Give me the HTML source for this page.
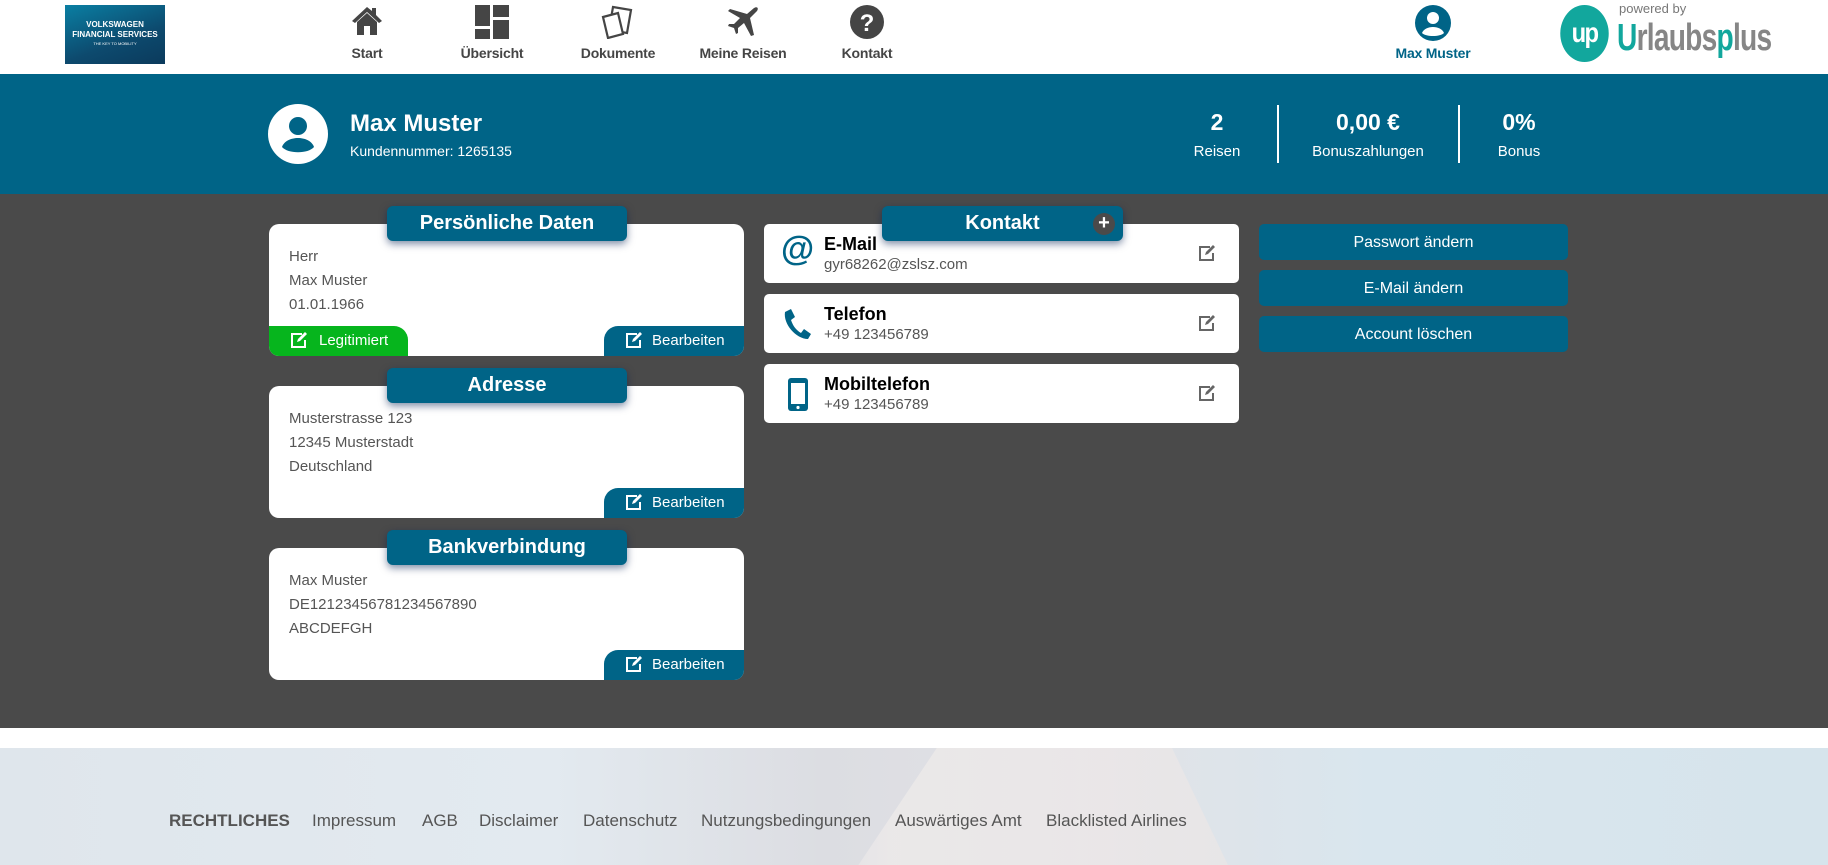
<!DOCTYPE html>
<html><head><meta charset="utf-8"><style>
*{margin:0;padding:0;box-sizing:border-box}
body{width:1828px;height:865px;overflow:hidden;font-family:"Liberation Sans",sans-serif;background:#fff;position:relative}
.a{position:absolute}
.blue{background:#006487}
.nav{position:absolute;top:0;width:130px;text-align:center}
.nav .ic{height:40px;padding-top:5px}
.nav svg{display:block;margin:0 auto}
.nav span{display:block;font-size:14px;font-weight:bold;color:#454545;margin-top:5px;letter-spacing:-0.2px}
.card{position:absolute;background:#fff;border-radius:10px;overflow:hidden}
.tab{position:absolute;background:#006487;color:#fff;font-weight:bold;font-size:20px;text-align:center;line-height:35px;border-radius:6px;box-shadow:0 3px 8px rgba(0,30,80,.5)}
.ln{position:absolute;left:20px;font-size:15px;color:#555}
.btn{position:absolute;bottom:0;height:30px;color:#fff;font-size:15px;line-height:30px}
.bb{right:0;width:140px;background:#006487;border-radius:14px 0 0 0;padding-left:48px}
.ct{position:absolute;left:60px;font-size:18px;font-weight:bold;color:#000}
.cs{position:absolute;left:60px;font-size:15px;color:#555}
.rb{position:absolute;left:1259px;width:309px;height:36px;background:#006487;border-radius:5px;color:#fff;font-size:16px;text-align:center;line-height:37px}
.edit{position:absolute;right:22px;top:20px}
.fl{position:absolute;top:811px;font-size:17px;color:#555}
</style></head><body>
<!-- header -->
<div class="a" style="left:65px;top:5px;width:100px;height:59px;background:linear-gradient(160deg,#0a7fa3,#0d4a6e 60%,#0b3a5c);color:#fff;text-align:center;font-size:8px;font-weight:bold;line-height:10px;padding-top:15px">VOLKSWAGEN<br>FINANCIAL SERVICES<div style="font-size:4px;font-weight:normal;line-height:8px">THE KEY TO MOBILITY</div></div>
<div class="nav" style="left:302px"><div class="ic"><svg width="34" height="32" viewBox="0 0 34 32"><path d="M17 2 L2 16 L5 18 L17 7 L29 18 L32 16 L26 10 L26 3 L22 3 L22 6 Z" fill="#454545"/><path d="M7 17 L17 8 L27 17 L27 30 L20 30 L20 21 L14 21 L14 30 L7 30 Z" fill="#454545"/></svg></div><span>Start</span></div>
<div class="nav" style="left:427px"><div class="ic"><svg width="34" height="34" viewBox="0 0 34 34"><rect x="0" y="0" width="15" height="21" fill="#454545"/><rect x="18" y="0" width="16" height="12" fill="#454545"/><rect x="18" y="15" width="16" height="19" fill="#454545"/><rect x="0" y="24" width="15" height="10" fill="#454545"/></svg></div><span>Übersicht</span></div>
<div class="nav" style="left:553px"><div class="ic"><svg width="34" height="34" viewBox="0 0 34 34"><path d="M12 2 L30 5 L26 28 L8 25 Z" fill="#fff" stroke="#454545" stroke-width="2.2"/><path d="M2 12 L17 8 L22 29 L7 33 Z" fill="#fff" stroke="#454545" stroke-width="2.2"/></svg></div><span>Dokumente</span></div>
<div class="nav" style="left:678px"><div class="ic"><svg width="34" height="32" viewBox="0 0 34 32"><path d="M28 3 C31 1 33 3 31 6 L24 13 L28 30 L25 31 L18 18 L12 23 L12 28 L10 29 L8 23 L2 21 L3 19 L8 19 L14 13 L2 6 L4 4 L21 9 Z" fill="#454545"/></svg></div><span>Meine Reisen</span></div>
<div class="nav" style="left:802px"><div class="ic"><svg width="34" height="34" viewBox="0 0 34 34"><circle cx="17" cy="17" r="17" fill="#454545"/><text x="17" y="26" font-family="Liberation Sans" font-weight="bold" font-size="24" fill="#fff" text-anchor="middle">?</text></svg></div><span>Kontakt</span></div>
<div class="nav" style="left:1368px"><div class="ic"><svg width="36" height="36" viewBox="0 0 36 36"><circle cx="18" cy="18" r="18" fill="#006487"/><circle cx="18" cy="13" r="6" fill="#fff"/><path d="M7 28 C10 20 26 20 29 28 C25 32 11 32 7 28Z" fill="#fff"/></svg></div><span style="color:#006487">Max Muster</span></div>
<div class="a" style="left:1556px;top:5px;width:57px;height:57px;border-radius:50%;background:#12a79d;color:#fff;font-weight:bold;font-size:28px;text-align:center;line-height:55px;letter-spacing:-2px;transform:scaleX(.85)">up</div>
<div class="a" style="left:1619px;top:1px;font-size:13px;color:#777">powered by</div>
<div class="a" style="left:1617px;top:17px;font-size:38px;font-weight:bold;letter-spacing:-1px;transform:scaleX(.74);transform-origin:left;color:#868686"><span style="color:#12a79d">U</span>rlaubs<span style="color:#12a79d">p</span>lus</div>
<!-- band -->
<div class="a blue" style="left:0;top:74px;width:1828px;height:120px"></div>
<svg class="a" style="left:268px;top:104px" width="60" height="60" viewBox="0 0 60 60"><circle cx="30" cy="30" r="30" fill="#fff"/><circle cx="30" cy="22" r="9" fill="#006487"/><path d="M14 43 C18 31 42 31 46 43 C40 50 20 50 14 43Z" fill="#006487"/></svg>
<div class="a" style="left:350px;top:110px;font-size:24px;font-weight:bold;color:#fff">Max Muster</div>
<div class="a" style="left:350px;top:143px;font-size:14px;color:#fff">Kundennummer: 1265135</div>
<div class="a" style="left:1157px;top:109px;width:120px;text-align:center;color:#fff"><div style="font-size:23px;font-weight:bold">2</div><div style="font-size:15px;margin-top:7px">Reisen</div></div>
<div class="a" style="left:1288px;top:109px;width:160px;text-align:center;color:#fff"><div style="font-size:23px;font-weight:bold">0,00 €</div><div style="font-size:15px;margin-top:7px">Bonuszahlungen</div></div>
<div class="a" style="left:1459px;top:109px;width:120px;text-align:center;color:#fff"><div style="font-size:23px;font-weight:bold">0%</div><div style="font-size:15px;margin-top:7px">Bonus</div></div>
<div class="a" style="left:1277px;top:105px;width:2px;height:58px;background:#fff"></div>
<div class="a" style="left:1458px;top:105px;width:2px;height:58px;background:#fff"></div>
<!-- gray -->
<div class="a" style="left:0;top:194px;width:1828px;height:534px;background:#4a4a4a"></div>

<svg width="0" height="0" style="position:absolute"><defs><g id="ed"><path d="M13 3 H3 V16 H16 V9" fill="none" stroke="currentColor" stroke-width="2"/><path d="M8 11 L9 8 L16 1 L18 3 L11 10 Z" fill="currentColor"/></g></defs></svg>

<div class="card" style="left:269px;top:224px;width:475px;height:132px">
<div class="ln" style="top:24px">Herr</div><div class="ln" style="top:48px">Max Muster</div><div class="ln" style="top:72px">01.01.1966</div>
<div class="btn" style="left:0;width:139px;background:#06b51d;border-radius:0 14px 0 0;padding-left:50px">Legitimiert</div>
<svg class="a" style="left:20px;top:107px;color:#fff" width="20" height="18"><use href="#ed"/></svg>
<div class="btn bb">Bearbeiten</div><svg class="a" style="left:355px;top:107px;color:#fff" width="20" height="18"><use href="#ed"/></svg>
</div>
<div class="tab" style="left:387px;top:206px;width:240px">Persönliche Daten</div>

<div class="card" style="left:269px;top:386px;width:475px;height:132px">
<div class="ln" style="top:24px">Musterstrasse 123</div><div class="ln" style="top:48px">12345 Musterstadt</div><div class="ln" style="top:72px">Deutschland</div>
<div class="btn bb">Bearbeiten</div><svg class="a" style="left:355px;top:107px;color:#fff" width="20" height="18"><use href="#ed"/></svg>
</div>
<div class="tab" style="left:387px;top:368px;width:240px">Adresse</div>

<div class="card" style="left:269px;top:548px;width:475px;height:132px">
<div class="ln" style="top:24px">Max Muster</div><div class="ln" style="top:48px">DE12123456781234567890</div><div class="ln" style="top:72px">ABCDEFGH</div>
<div class="btn bb">Bearbeiten</div><svg class="a" style="left:355px;top:107px;color:#fff" width="20" height="18"><use href="#ed"/></svg>
</div>
<div class="tab" style="left:387px;top:530px;width:240px">Bankverbindung</div>

<!-- contact -->
<div class="card" style="left:764px;top:224px;width:475px;height:59px;border-radius:5px">
<div class="a" style="left:17px;top:6px;font-size:34px;color:#006487;font-weight:bold">@</div>
<div class="ct" style="top:10px">E-Mail</div><div class="cs" style="top:32px">gyr68262@zslsz.com</div>
<svg class="edit" style="color:#666" width="20" height="18"><use href="#ed"/></svg></div>
<div class="card" style="left:764px;top:294px;width:475px;height:59px;border-radius:5px">
<svg class="a" style="left:18px;top:14px" width="30" height="32" viewBox="0 0 30 32"><path d="M3 4 L9 1 L13 9 L9 12 C11 18 14 22 19 25 L22 21 L29 26 L26 31 C14 31 1 16 3 4Z" fill="#006487"/></svg>
<div class="ct" style="top:10px">Telefon</div><div class="cs" style="top:32px">+49 123456789</div>
<svg class="edit" style="color:#666" width="20" height="18"><use href="#ed"/></svg></div>
<div class="card" style="left:764px;top:364px;width:475px;height:59px;border-radius:5px">
<svg class="a" style="left:24px;top:14px" width="20" height="33" viewBox="0 0 20 33"><rect x="0" y="0" width="20" height="33" rx="3" fill="#006487"/><rect x="3" y="5" width="14" height="21" fill="#fff"/><circle cx="10" cy="29.5" r="1.6" fill="#fff"/></svg>
<div class="ct" style="top:10px">Mobiltelefon</div><div class="cs" style="top:32px">+49 123456789</div>
<svg class="edit" style="color:#666" width="20" height="18"><use href="#ed"/></svg></div>
<div class="tab" style="left:882px;top:206px;width:241px">Kontakt<div style="position:absolute;right:8px;top:7px;width:22px;height:22px;border-radius:50%;background:#4a4a4a;line-height:21px;font-size:20px">+</div></div>

<div class="rb" style="top:224px">Passwort ändern</div>
<div class="rb" style="top:270px">E-Mail ändern</div>
<div class="rb" style="top:316px">Account löschen</div>

<!-- footer -->
<div class="a" style="left:0;top:748px;width:1828px;height:117px;background:linear-gradient(90deg,#dfe6ec 0%,#e3eaf0 30%,#dcdde2 45%,#e2e2e6 60%,#d9e6ee 75%,#d6e4ec 100%)"></div>
<div class="a" style="left:780px;top:748px;width:560px;height:117px;background:linear-gradient(90deg,rgba(255,255,255,0),rgba(240,236,235,.7) 20%,rgba(235,230,230,.7) 80%,rgba(255,255,255,0));clip-path:polygon(28% 0,70% 0,80% 100%,14% 100%)"></div>
<div class="fl" style="left:169px;font-weight:bold">RECHTLICHES</div>
<div class="fl" style="left:312px">Impressum</div>
<div class="fl" style="left:422px">AGB</div>
<div class="fl" style="left:479px">Disclaimer</div>
<div class="fl" style="left:583px">Datenschutz</div>
<div class="fl" style="left:701px">Nutzungsbedingungen</div>
<div class="fl" style="left:895px">Auswärtiges Amt</div>
<div class="fl" style="left:1046px">Blacklisted Airlines</div>
</body></html>
